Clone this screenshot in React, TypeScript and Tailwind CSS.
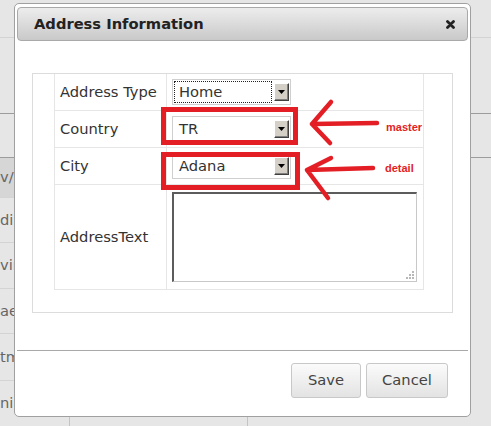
const RED = "#e31e25";

function Backdrop() {
  const rows = [
    { text: "v/Cad", h: "h-[40px] bg-[#d6d6d6]" },
    { text: "dile", h: "h-[45px]" },
    { text: "vinc", h: "h-[46px]" },
    { text: "aeli", h: "h-[45px]" },
    { text: "tmen", h: "h-[47px]" },
    { text: "nihal", h: "h-[46px]" },
  ];
  return (
    <div className="flex flex-col">
      <div className="h-[38px] border-b border-[#d3d3d3]" />
      <div className="h-[76px] border-b border-[#9c9c9c]" />
      <div className="h-[44px] border-b border-[#9c9c9c]" />
      <div className="flex">
        <div className="w-[70px] border-r border-[#c4c4c4] flex flex-col text-[#666]">
          {rows.map((r, i) => (
            <div key={i} className={`${r.h} flex items-center border-b border-[#d4d4d4] whitespace-nowrap`}>
              <span>{r.text}</span>
            </div>
          ))}
        </div>
        <div className="w-[178px] h-[300px] border-r border-[#c4c4c4]" />
      </div>
    </div>
  );
}

function DropButton() {
  return (
    <div className="w-[15px] h-[18px] bg-[#d4d0c8] border border-t-white border-l-white border-r-[#404040] border-b-[#404040] shadow-[inset_-1px_-1px_0_#808080] flex items-center justify-center">
      <svg width="7" height="4" viewBox="0 0 7 4">
        <path d="M0 0H7L3.5 4Z" fill="#000" />
      </svg>
    </div>
  );
}

function Select({ value, focused }: { value: string; focused?: boolean }) {
  return (
    <div className="w-[119px] h-[26px] border border-[#cfcfcf] bg-white flex items-center p-[1px]">
      <div
        className={`w-[98px] h-[22px] flex items-center pl-[4px] text-[#333] ${
          focused ? "border border-dotted border-[#222]" : "pl-[5px]"
        }`}
      >
        {value}
      </div>
      <div className="ml-[2px]">
        <DropButton />
      </div>
    </div>
  );
}

function TextArea() {
  return (
    <div className="relative w-[245px] h-[90px] bg-white border-t-2 border-l-2 border-t-[#5c5c5c] border-l-[#5c5c5c] border-r border-b border-r-[#c8c8c8] border-b-[#c8c8c8]">
      <svg className="absolute right-[2px] bottom-[2px]" width="8" height="8" viewBox="0 0 8 8">
        <rect x="6" y="0" width="2" height="2" fill="#b8b8b8" />
        <rect x="3" y="3" width="2" height="2" fill="#b8b8b8" />
        <rect x="6" y="3" width="2" height="2" fill="#b8b8b8" />
        <rect x="0" y="6" width="2" height="2" fill="#b8b8b8" />
        <rect x="3" y="6" width="2" height="2" fill="#b8b8b8" />
        <rect x="6" y="6" width="2" height="2" fill="#b8b8b8" />
      </svg>
    </div>
  );
}

function Row({ label, h, children }: { label: string; h: string; children: React.ReactNode }) {
  return (
    <div className={`flex ${h}`}>
      <div className="w-[112px] border-r border-[#e6e6e6] flex items-center pl-[5px] text-[#333]">{label}</div>
      <div className="flex-1 flex items-center pl-[5px]">{children}</div>
    </div>
  );
}

function Dialog() {
  return (
    <div className="absolute left-[14px] top-[3px] w-[457px] h-[414px] bg-white border border-[#a0a0a0] rounded-[5px] pt-[3px] px-[2px] flex flex-col">
      <div className="h-[34px] rounded-[4px] border border-[#a9a9a9] bg-gradient-to-b from-[#ededed] to-[#c9c9c9] flex items-center justify-between pl-[16px] pr-[12px]">
        <span className="font-bold text-[#222]">Address Information</span>
        <svg width="9" height="9" viewBox="0 0 9 9">
          <path d="M1.5 1.5L7.5 7.5M7.5 1.5L1.5 7.5" stroke="#222" strokeWidth="2.8" strokeLinecap="round" />
        </svg>
      </div>

      <div className="mt-[32px] ml-[15px] w-[421px] border border-[#dcdcdc] pl-[21px] pb-[22px]">
        <div className="w-[370px] border-l border-r border-b border-[#e6e6e6] flex flex-col">
          <Row label="Address Type" h="h-[37px] border-b border-[#e6e6e6]">
            <Select value="Home" focused />
          </Row>
          <Row label="Country" h="h-[37px] border-b border-[#e6e6e6]">
            <Select value="TR" />
          </Row>
          <Row label="City" h="h-[37px] border-b border-[#e6e6e6]">
            <Select value="Adana" />
          </Row>
          <Row label="AddressText" h="h-[104px]">
            <TextArea />
          </Row>
        </div>
      </div>

      <div className="mt-[37px] border-t border-[#a8a8a8] pt-[12px] pr-[20px] flex justify-end gap-[5px]">
        <button className="w-[70px] h-[35px] rounded-[3px] border border-[#c8c8c8] bg-gradient-to-b from-[#fbfbfb] to-[#e3e3e3] text-[#444]">
          Save
        </button>
        <button className="w-[82px] h-[35px] rounded-[3px] border border-[#c8c8c8] bg-gradient-to-b from-[#fbfbfb] to-[#e3e3e3] text-[#444]">
          Cancel
        </button>
      </div>
    </div>
  );
}

function Annotations() {
  return (
    <>
      <div className="absolute left-[161px] top-[107px] w-[137px] h-[38px] border-[5px] border-[#e31e25]" />
      <div className="absolute left-[161px] top-[152px] w-[139px] h-[38px] border-[5px] border-[#e31e25]" />
      <svg className="absolute left-0 top-0" width="491" height="426" viewBox="0 0 491 426">
        <g stroke={RED} strokeWidth="4.5" strokeLinecap="round" fill="none">
          <path d="M312 124L377 123M312 124L331 102M312 124L330 143" />
          <path d="M307 170L373 168M307 170L331 158M307 170L328 198" />
        </g>
      </svg>
      <span className="absolute left-[386px] top-[120px] leading-[14px] text-[11px] font-bold text-[#e31e25] font-['Liberation_Sans',sans-serif]">
        master
      </span>
      <span className="absolute left-[385px] top-[161px] leading-[14px] text-[11px] font-bold text-[#e31e25] font-['Liberation_Sans',sans-serif]">
        detail
      </span>
    </>
  );
}

export default function App() {
  return (
    <div className="relative w-[491px] h-[426px] overflow-hidden bg-[#e6e6e6] font-['DejaVu_Sans',sans-serif] text-[14.7px]">
      <Backdrop />
      <Dialog />
      <Annotations />
    </div>
  );
}
